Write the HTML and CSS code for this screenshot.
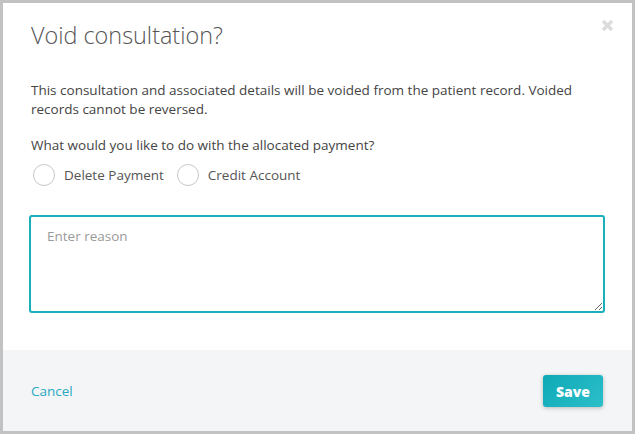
FILE: index.html
```html
<!DOCTYPE html>
<html lang="en">
<head>
<meta charset="utf-8">
<title>Void consultation</title>
<link rel="stylesheet" href="styles.css">
</head>
<body>
<div class="dialog">
  <div class="dialog-main">
    <div class="dialog-header">
      <h1 class="dialog-title">Void consultation?</h1>
      <button class="close-btn" type="button" aria-label="Close">
        <svg width="13" height="13" viewBox="0 0 13 13"><path d="M2 2L11 11M11 2L2 11" stroke="#dcdcdc" stroke-width="3.4" stroke-linecap="butt"/></svg>
      </button>
    </div>
    <div class="dialog-body">
      <p class="message">This consultation and associated details will be voided from the patient record. Voided records cannot be reversed.</p>
      <p class="question">What would you like to do with the allocated payment?</p>
      <div class="radio-group">
        <label class="radio"><span class="radio-circle"></span><span class="radio-label">Delete Payment</span></label>
        <label class="radio"><span class="radio-circle"></span><span class="radio-label">Credit Account</span></label>
      </div>
      <textarea class="reason" placeholder="Enter reason"></textarea>
    </div>
  </div>
  <div class="dialog-footer">
    <a class="cancel" href="#">Cancel</a>
    <button class="save" type="button">Save</button>
  </div>
</div>
</body>
</html>
```
FILE: styles.css
```css
html, body {
  margin: 0;
  padding: 0;
}
body {
  background: #c2c2c2;
  padding: 3px;
  height: 434px;
  box-sizing: border-box;
  font-family: "Open Sans", "Liberation Sans", sans-serif;
}
.dialog {
  background: #fff;
  height: 428px;
  display: flex;
  flex-direction: column;
}
.dialog-main {
  flex: 1;
}
.dialog-header {
  display: flex;
  justify-content: space-between;
  align-items: flex-start;
  padding: 15px 18px 0 28px;
}
.dialog-title {
  margin: 0;
  font-weight: 300;
  font-size: 23.4px;
  line-height: 34px;
  color: #555;
}
.close-btn {
  border: 0;
  background: none;
  padding: 0;
  margin-top: 1px;
  width: 13px;
  height: 13px;
  display: block;
}
.close-btn svg { display: block; }
.dialog-body {
  padding: 0 28px;
}
.message {
  margin: 29px 0 0;
  font-size: 13.5px;
  line-height: 19px;
  color: #444;
}
.question {
  margin: 17px 0 0;
  font-size: 13.5px;
  line-height: 19px;
  color: #444;
}
.radio-group {
  display: flex;
  gap: 13px;
  margin-top: 9px;
  padding-left: 2px;
}
.radio {
  display: flex;
  align-items: center;
  gap: 9px;
  font-size: 13.5px;
  color: #555;
}
.radio-circle {
  width: 20px;
  height: 20px;
  border: 1px solid #c8c8c8;
  border-radius: 50%;
  background: #fff;
}
.reason {
  display: block;
  box-sizing: border-box;
  width: 576px;
  height: 98px;
  margin: 29px 0 0 -2px;
  border: 2px solid #17b0bb;
  border-radius: 3px;
  padding: 10px 16px;
  font-family: "Open Sans", "Liberation Sans", sans-serif;
  font-size: 13.5px;
  color: #444;
  resize: vertical;
  outline: none;
}
.reason::placeholder {
  color: #9a9a9a;
}
.dialog-footer {
  height: 81px;
  background: #f4f5f7;
  display: flex;
  align-items: center;
  justify-content: space-between;
  padding: 0 29px 0 28px;
}
.cancel {
  font-size: 13.5px;
  color: #2ba8c2;
  text-decoration: none;
}
.save {
  width: 60px;
  height: 32px;
  border: 0;
  border-radius: 3px;
  background: linear-gradient(135deg, #0ea9b6 0%, #2cbfca 100%);
  box-shadow: 0 1px 4px rgba(0, 0, 0, 0.25);
  color: #fff;
  font-family: "Open Sans", "Liberation Sans", sans-serif;
  font-weight: 800;
  font-size: 14px;
  margin-top: 1px;
}
```
